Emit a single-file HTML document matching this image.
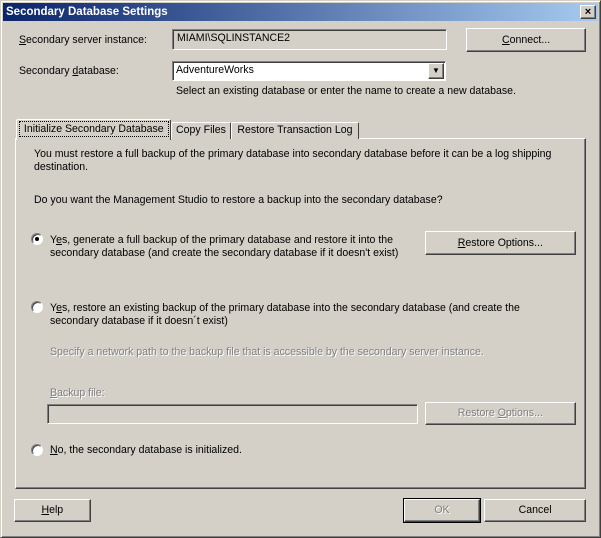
<!DOCTYPE html><html><head><style>
*{margin:0;padding:0;box-sizing:border-box}
body{width:601px;height:538px;background:#d4d0c8;font-family:"Liberation Sans",sans-serif;font-size:11px;color:#000;position:relative;overflow:hidden}
.a{position:absolute;white-space:nowrap;transform:scaleX(.96);transform-origin:0 0}
.s{display:inline-block;transform:scaleX(.96);white-space:nowrap}
.win{position:absolute;left:0;top:0;width:601px;height:538px;border:1px solid;border-color:#d4d0c8 #404040 #404040 #d4d0c8;box-shadow:inset 1px 1px 0 #fff,inset -1px -1px 0 #808080}
.title{position:absolute;left:3px;top:3px;width:595px;height:18px;background:linear-gradient(to right,#0a246a,#a6caf0);color:#fff;font-weight:bold;font-size:11.5px;line-height:18px;padding-left:3px}
.btn{position:absolute;border:1px solid;border-color:#fff #404040 #404040 #fff;box-shadow:inset -1px -1px 0 #808080;text-align:center;background:#d4d0c8;white-space:nowrap}
.sunk{position:absolute;border:1px solid;border-color:#808080 #fff #fff #808080;box-shadow:inset 1px 1px 0 #404040}
.g{color:#808080;text-shadow:1px 1px 0 #fff}
.radio{position:absolute;width:12px;height:12px;border-radius:50%;background:#fff;border:1px solid;border-color:#808080 #fff #fff #808080;box-shadow:inset 1px 1px 0 #404040}
.tab{position:absolute;border:1px solid;border-bottom:none;border-color:#fff #404040 #404040 #fff;background:#d4d0c8;text-align:center;border-radius:2px 2px 0 0;line-height:15px;white-space:nowrap}
u{text-decoration:underline}
</style></head><body>
<div class="win"></div>
<div class="title">Secondary Database Settings</div>
<div class="btn" style="left:580px;top:5px;width:16px;height:14px;line-height:12px;font-weight:bold;font-size:11px">×</div>

<div class="a" style="left:19px;top:34px"><u>S</u>econdary server instance:</div>
<div class="sunk" style="left:172px;top:29px;width:275px;height:21px;padding:2px 4px"><span class="s" style="transform-origin:0 0">MIAMI\SQLINSTANCE2</span></div>
<div class="btn" style="left:466px;top:28px;width:120px;height:24px;line-height:22px"><span class="s"><u>C</u>onnect...</span></div>

<div class="a" style="left:19px;top:65px">Secondary <u>d</u>atabase:</div>
<div class="sunk" style="left:172px;top:61px;width:274px;height:20px;background:#fff;padding:2px 3px"><span class="s" style="transform-origin:0 0">AdventureWorks</span></div>
<div class="btn" style="left:428px;top:63px;width:16px;height:16px;font-size:8px;line-height:14px">▼</div>
<div class="a" style="left:176px;top:85px">Select an existing database or enter the name to create a new database.</div>

<div style="position:absolute;left:15px;top:138px;width:571px;height:351px;border:1px solid;border-color:#fff #404040 #404040 #fff;box-shadow:inset -1px -1px 0 #808080"></div>
<div class="tab" style="left:231px;top:122px;width:128px;height:17px"><span class="s">Restore Transaction Log</span></div>
<div class="tab" style="left:171px;top:122px;width:60px;height:17px"><span class="s">Copy Files</span></div>
<div class="tab" style="left:16px;top:119px;width:155px;height:21px;line-height:18px"><span style="outline:1px dotted #000;display:inline-block;width:148px;line-height:14px"><span class="s">Initialize Secondary Database</span></span></div>

<div class="a" style="left:34px;top:148px">You must restore a full backup of the primary database into secondary database before it can be a log shipping</div>
<div class="a" style="left:34px;top:161px">destination.</div>
<div class="a" style="left:34px;top:194px">Do you want the Management Studio to restore a backup into the secondary database?</div>

<div class="radio" style="left:31px;top:233px"><div style="position:absolute;left:3px;top:3px;width:4px;height:4px;background:#000;border-radius:50%"></div></div>
<div class="a" style="left:50px;top:234px">Y<u>e</u>s, generate a full backup of the primary database and restore it into the</div>
<div class="a" style="left:50px;top:247px">secondary database (and create the secondary database if it doesn't exist)</div>
<div class="btn" style="left:425px;top:231px;width:151px;height:24px;line-height:22px"><span class="s"><u>R</u>estore Options...</span></div>

<div class="radio" style="left:31px;top:301px"></div>
<div class="a" style="left:50px;top:302px">Y<u>e</u>s, restore an existing backup of the primary database into the secondary database (and create the</div>
<div class="a" style="left:50px;top:315px">secondary database if it doesn´t exist)</div>
<div class="a g" style="left:50px;top:346px">Specify a network path to the backup file that is accessible by the secondary server instance.</div>
<div class="a g" style="left:50px;top:387px"><u>B</u>ackup file:</div>
<div class="sunk" style="left:47px;top:404px;width:371px;height:20px"></div>
<div class="btn g" style="left:425px;top:402px;width:151px;height:23px;line-height:21px"><span class="s">Restore <u>O</u>ptions...</span></div>

<div class="radio" style="left:31px;top:444px"></div>
<div class="a" style="left:50px;top:444px"><u>N</u>o, the secondary database is initialized.</div>

<div class="btn" style="left:14px;top:499px;width:77px;height:23px;line-height:21px"><span class="s"><u>H</u>elp</span></div>
<div style="position:absolute;left:403px;top:498px;width:78px;height:25px;border:1px solid #000"></div>
<div class="btn g" style="left:404px;top:499px;width:76px;height:23px;line-height:21px"><span class="s">OK</span></div>
<div class="btn" style="left:484px;top:499px;width:102px;height:23px;line-height:21px"><span class="s">Cancel</span></div>
</body></html>
